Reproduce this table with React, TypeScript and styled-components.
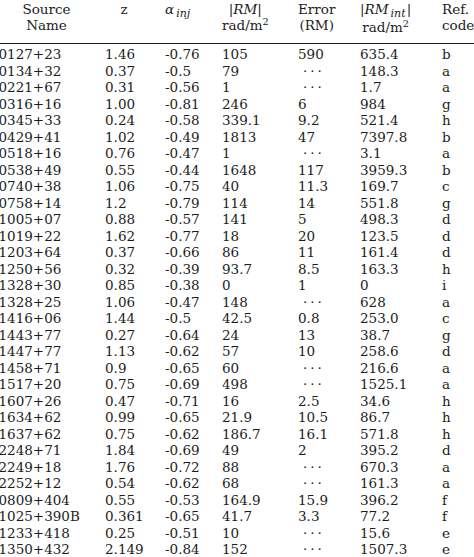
import React from "react";
import styled, { createGlobalStyle } from "styled-components";

const Global = createGlobalStyle`
  html, body { margin: 0; padding: 0; background: #fff; }
  body {
    font-family: "DejaVu Serif", "Liberation Serif", serif;
    color: #1c1c1c;
    overflow: hidden;
  }
`;

const COLS = "106.5px 60px 57px 76px 62px 82px 1fr";

const Table = styled.div`
  margin-left: -1.5px;
  width: calc(100% + 1.5px);
  font-size: 13.5px;
`;

const HeaderRow = styled.div`
  display: grid;
  grid-template-columns: ${COLS};
  padding: 0.75px 0 7.25px;
  line-height: 16px;
`;

const HeadCell = styled.div<{ $w?: number; $left?: boolean }>`
  justify-self: start;
  display: flex;
  flex-direction: column;
  align-items: ${(p) => (p.$left ? "flex-start" : "center")};
  width: ${(p) => (p.$w ? `${p.$w}px` : "auto")};
  white-space: nowrap;
`;

const Rule = styled.div`
  height: 1px;
  background: #1c1c1c;
`;

const Body = styled.div`
  padding-top: 2.7px;
`;

const Row = styled.div`
  display: grid;
  grid-template-columns: ${COLS};
  line-height: 16.5px;
  height: 16.5px;
`;

const Cell = styled.div`
  white-space: nowrap;
`;

const Dots = styled.span`
  display: inline-block;
  padding-left: 5px;
  letter-spacing: 3px;
`;

const MathI = styled.span`
  font-style: italic;
`;

const Sub = styled.span`
  display: inline-block;
  font-size: 0.82em;
  font-style: italic;
  vertical-align: -0.32em;
  line-height: 1;
  padding: 0 1px 0 2px;
`;

const Sup = styled.span`
  font-size: 0.72em;
  vertical-align: 0.5em;
  line-height: 0;
`;

type R = [string, string, string, string, string | null, string, string];

const rows: R[] = [
  ["0127+23", "1.46", "-0.76", "105", "590", "635.4", "b"],
  ["0134+32", "0.37", "-0.5", "79", null, "148.3", "a"],
  ["0221+67", "0.31", "-0.56", "1", null, "1.7", "a"],
  ["0316+16", "1.00", "-0.81", "246", "6", "984", "g"],
  ["0345+33", "0.24", "-0.58", "339.1", "9.2", "521.4", "h"],
  ["0429+41", "1.02", "-0.49", "1813", "47", "7397.8", "b"],
  ["0518+16", "0.76", "-0.47", "1", null, "3.1", "a"],
  ["0538+49", "0.55", "-0.44", "1648", "117", "3959.3", "b"],
  ["0740+38", "1.06", "-0.75", "40", "11.3", "169.7", "c"],
  ["0758+14", "1.2", "-0.79", "114", "14", "551.8", "g"],
  ["1005+07", "0.88", "-0.57", "141", "5", "498.3", "d"],
  ["1019+22", "1.62", "-0.77", "18", "20", "123.5", "d"],
  ["1203+64", "0.37", "-0.66", "86", "11", "161.4", "d"],
  ["1250+56", "0.32", "-0.39", "93.7", "8.5", "163.3", "h"],
  ["1328+30", "0.85", "-0.38", "0", "1", "0", "i"],
  ["1328+25", "1.06", "-0.47", "148", null, "628", "a"],
  ["1416+06", "1.44", "-0.5", "42.5", "0.8", "253.0", "c"],
  ["1443+77", "0.27", "-0.64", "24", "13", "38.7", "g"],
  ["1447+77", "1.13", "-0.62", "57", "10", "258.6", "d"],
  ["1458+71", "0.9", "-0.65", "60", null, "216.6", "a"],
  ["1517+20", "0.75", "-0.69", "498", null, "1525.1", "a"],
  ["1607+26", "0.47", "-0.71", "16", "2.5", "34.6", "h"],
  ["1634+62", "0.99", "-0.65", "21.9", "10.5", "86.7", "h"],
  ["1637+62", "0.75", "-0.62", "186.7", "16.1", "571.8", "h"],
  ["2248+71", "1.84", "-0.69", "49", "2", "395.2", "d"],
  ["2249+18", "1.76", "-0.72", "88", null, "670.3", "a"],
  ["2252+12", "0.54", "-0.62", "68", null, "161.3", "a"],
  ["0809+404", "0.55", "-0.53", "164.9", "15.9", "396.2", "f"],
  ["1025+390B", "0.361", "-0.65", "41.7", "3.3", "77.2", "f"],
  ["1233+418", "0.25", "-0.51", "10", null, "15.6", "e"],
  ["1350+432", "2.149", "-0.84", "152", null, "1507.3", "e"],
];

const RadM2 = () => (
  <span>
    rad/m<Sup>2</Sup>
  </span>
);

export default function App() {
  return (
    <>
      <Global />
      <Table>
        <HeaderRow>
          <HeadCell $w={96}>
            <span>Source</span>
            <span>Name</span>
          </HeadCell>
          <HeadCell $w={38}>
            <span>z</span>
          </HeadCell>
          <HeadCell $left>
            <span>
              <MathI>α</MathI>
              <Sub>inj</Sub>
            </span>
          </HeadCell>
          <HeadCell>
            <span>
              |<MathI>RM</MathI>|
            </span>
            <RadM2 />
          </HeadCell>
          <HeadCell>
            <span>Error</span>
            <span>(RM)</span>
          </HeadCell>
          <HeadCell>
            <span>
              |<MathI>RM</MathI>
              <Sub>int</Sub>|
            </span>
            <RadM2 />
          </HeadCell>
          <HeadCell $left>
            <span>Ref.</span>
            <span>code</span>
          </HeadCell>
        </HeaderRow>
        <Rule />
        <Body>
          {rows.map((r) => (
            <Row key={r[0]}>
              <Cell>{r[0]}</Cell>
              <Cell>{r[1]}</Cell>
              <Cell>{r[2]}</Cell>
              <Cell>{r[3]}</Cell>
              <Cell>{r[4] === null ? <Dots>···</Dots> : r[4]}</Cell>
              <Cell>{r[5]}</Cell>
              <Cell>{r[6]}</Cell>
            </Row>
          ))}
        </Body>
      </Table>
    </>
  );
}
